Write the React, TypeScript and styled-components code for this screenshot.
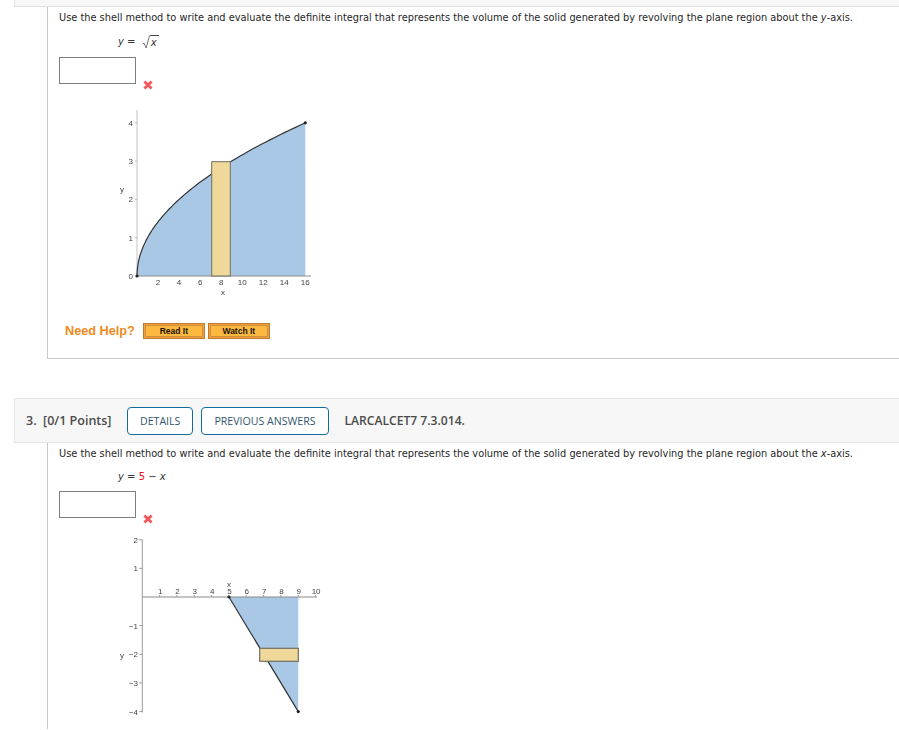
import React from 'react';
import styled, { createGlobalStyle } from 'styled-components';

const GlobalStyle = createGlobalStyle`
  html, body {
    margin: 0;
    padding: 0;
    background: #ffffff;
  }
`;

function WrongMark() {
  return (
    <MarkIcon viewBox="0 0 10 10" aria-label="incorrect">
      <path d="M1.4 1.4 L8.6 8.6 M8.6 1.4 L1.4 8.6" stroke="#f4565e" strokeWidth="2.8" fill="none" />
    </MarkIcon>
  );
}

function RootCurvePlot() {
  const x0 = 137;
  const y0 = 276;
  const ux = 10.52;
  const uy = 38.3;
  const pts: string[] = [];
  for (let i = 0; i <= 64; i++) {
    const x = (i / 64) * (i / 64) * 16;
    pts.push(`${(x0 + x * ux).toFixed(1)},${(y0 - Math.sqrt(x) * uy).toFixed(1)}`);
  }
  const curve = pts.join(' ');
  return (
    <PlotSvg width="220" height="190" viewBox="110 110 220 190">
      <polygon points={`${curve} ${x0 + 16 * ux},${y0}`} fill="#a9c8e6" />
      <line x1={x0} y1="110" x2={x0} y2={y0} stroke="#c4c4c4" strokeWidth="1" />
      <line x1={x0} y1={y0} x2="311" y2={y0} stroke="#8a8a8a" strokeWidth="1" />
      {[1, 2, 3, 4].map((n) => (
        <line key={n} x1={x0 - 2} y1={y0 - n * uy} x2={x0} y2={y0 - n * uy} stroke="#bbb" strokeWidth="1" />
      ))}
      <polyline points={curve} fill="none" stroke="#333" strokeWidth="1.2" />
      <rect x="211.7" y="161.7" width="18.6" height="114.3" fill="#f0d89b" stroke="#6f6f62" strokeWidth="1" />
      <circle cx={x0} cy={y0} r="1.6" fill="#222" />
      <circle cx={x0 + 16 * ux} cy={y0 - 4 * uy} r="1.6" fill="#222" />
      {[0, 1, 2, 3, 4].map((n) => (
        <PlotLabel key={n} x="133" y={y0 - n * uy + 3} textAnchor="end">{n}</PlotLabel>
      ))}
      {[2, 4, 6, 8, 10, 12, 14, 16].map((n) => (
        <PlotLabel key={n} x={x0 + n * ux} y="285" textAnchor="middle">{n}</PlotLabel>
      ))}
      <PlotLabel x="122" y="192" textAnchor="middle">y</PlotLabel>
      <PlotLabel x="223" y="295" textAnchor="middle">x</PlotLabel>
    </PlotSvg>
  );
}

function LinePlot() {
  const x0 = 142.3;
  const y0 = 598;
  const ux = 17.33;
  const uy = 28.65;
  const px = (n: number) => x0 + n * ux;
  const py = (n: number) => y0 - n * uy;
  return (
    <PlotSvg width="220" height="200" viewBox="110 530 220 200">
      <polygon points={`${px(5)},${py(0)} ${px(9)},${py(0)} ${px(9)},${py(-4)}`} fill="#a9c8e6" />
      <line x1={x0} y1="540.5" x2={x0} y2="713.5" stroke="#9a9a9a" strokeWidth="1" />
      <line x1={x0} y1={y0} x2="317" y2={y0} stroke="#8a8a8a" strokeWidth="1" />
      {[2, 1, -1, -2, -3, -4].map((n) => (
        <line key={n} x1={x0 - 3} y1={py(n)} x2={x0} y2={py(n)} stroke="#9a9a9a" strokeWidth="1" />
      ))}
      {[1, 2, 3, 4, 5, 6, 7, 8, 9, 10].map((n) => (
        <line key={n} x1={px(n)} y1={y0 - 2} x2={px(n)} y2={y0} stroke="#9a9a9a" strokeWidth="1" />
      ))}
      <line x1={px(5)} y1={py(0)} x2={px(9)} y2={py(-4)} stroke="#333" strokeWidth="1.2" />
      <rect x="259.7" y="649.3" width="38.6" height="13" fill="#f0d89b" stroke="#6f6f62" strokeWidth="1.2" />
      <circle cx={px(5)} cy={py(0)} r="1.6" fill="#222" />
      <circle cx={px(9)} cy={py(-4)} r="1.6" fill="#222" />
      {[2, 1].map((n) => (
        <PlotLabel key={n} x="138" y={py(n) + 3} textAnchor="end">{n}</PlotLabel>
      ))}
      {[-1, -2, -3, -4].map((n) => (
        <PlotLabel key={n} x="138" y={py(n) + 3} textAnchor="end">{`\u2212${-n}`}</PlotLabel>
      ))}
      {[1, 2, 3, 4, 5, 6, 7, 8, 9, 10].map((n) => (
        <PlotLabel key={n} x={px(n) + 0.5} y="595" textAnchor="middle">{n}</PlotLabel>
      ))}
      <PlotLabel x="122" y="659" textAnchor="middle">y</PlotLabel>
      <PlotLabel x="229" y="587.5" textAnchor="middle">x</PlotLabel>
    </PlotSvg>
  );
}

export default function App() {
  return (
    <Page>
      <GlobalStyle />
      <TopStrip />
      <QuestionBody>
        <Prompt>
          Use the shell method to write and evaluate the definite integral that represents the volume of the solid
          generated by revolving the plane region about the <em>y</em>-axis.
        </Prompt>
        <Equation $gap={11}>
          <em>y</em> = <RootSign viewBox="0 0 8 14"><path d="M0.5 9 L2 8.2 L4.2 13 L7.5 0.5" fill="none" stroke="#777" strokeWidth="1" /></RootSign>
          <Radicand><em>x</em></Radicand>
        </Equation>
        <AnswerRow $gap={8}>
          <AnswerBox />
          <WrongMark />
        </AnswerRow>
        <PlotWrap $gap={20}>
          <RootCurvePlot />
        </PlotWrap>
        <HelpRow>
          <HelpLabel>Need Help?</HelpLabel>
          <HelpButton>Read It</HelpButton>
          <HelpButton>Watch It</HelpButton>
        </HelpRow>
      </QuestionBody>

      <QuestionHeader>
        <PointsLabel>3.&nbsp; [0/1 Points]</PointsLabel>
        <OutlineButton>DETAILS</OutlineButton>
        <OutlineButton>PREVIOUS ANSWERS</OutlineButton>
        <SourceLabel>LARCALCET7 7.3.014.</SourceLabel>
      </QuestionHeader>
      <QuestionBody $open>
        <Prompt>
          Use the shell method to write and evaluate the definite integral that represents the volume of the solid
          generated by revolving the plane region about the <em>x</em>-axis.
        </Prompt>
        <Equation $gap={10}>
          <em>y</em> = <RedValue>5</RedValue> − <em>x</em>
        </Equation>
        <AnswerRow $gap={7}>
          <AnswerBox />
          <WrongMark />
        </AnswerRow>
        <PlotWrap $gap={5}>
          <LinePlot />
        </PlotWrap>
      </QuestionBody>
    </Page>
  );
}

const Page = styled.div`
  width: 899px;
  height: 730px;
  overflow: hidden;
  background: #ffffff;
`;

const TopStrip = styled.div`
  height: 7px;
  margin-left: 14px;
  box-sizing: border-box;
  background: #f7f7f7;
  border-left: 1px solid #e4e4e4;
  border-bottom: 1px solid #e0e0e0;
`;

const QuestionBody = styled.div<{ $open?: boolean }>`
  margin-left: 47px;
  padding: 4px 0 ${(p) => (p.$open ? 0 : 19)}px 11px;
  border-left: 1px solid #c8c8c8;
  border-bottom: ${(p) => (p.$open ? 'none' : '1px solid #c8c8c8')};
`;

const Prompt = styled.div`
  font-family: 'DejaVu Sans', Verdana, sans-serif;
  font-size: 9.8px;
  line-height: 13px;
  color: #1f1f1f;
  white-space: nowrap;
`;

const Equation = styled.div<{ $gap: number }>`
  display: flex;
  align-items: flex-end;
  margin: ${(p) => p.$gap}px 0 0 59px;
  height: 14px;
  font-family: 'DejaVu Sans', Verdana, sans-serif;
  font-size: 10px;
  line-height: 14px;
  color: #333333;
  white-space: pre;
`;

const RootSign = styled.svg`
  display: block;
  width: 8px;
  height: 14px;
  margin-left: 3px;
`;

const Radicand = styled.span`
  display: block;
  height: 13px;
  border-top: 1px solid #444444;
  line-height: 13px;
  padding: 0 2px 0 1px;
`;

const RedValue = styled.span`
  color: #ee1111;
`;

const AnswerRow = styled.div<{ $gap: number }>`
  display: flex;
  align-items: flex-end;
  gap: 7px;
  margin-top: ${(p) => p.$gap}px;
  height: 33px;
`;

const AnswerBox = styled.div`
  width: 77px;
  height: 27px;
  margin-bottom: 6px;
  box-sizing: border-box;
  border: 1px solid #7f7f7f;
  background: #ffffff;
`;

const MarkIcon = styled.svg`
  width: 10px;
  height: 10px;
  display: block;
`;

const PlotWrap = styled.div<{ $gap: number }>`
  margin: ${(p) => p.$gap}px 0 0 51px;
`;

const PlotSvg = styled.svg`
  display: block;
  filter: blur(0.3px);
`;

const PlotLabel = styled.text`
  font-family: 'Liberation Sans', Arial, sans-serif;
  font-size: 8px;
  fill: #444444;
`;

const HelpRow = styled.div`
  display: flex;
  align-items: center;
  margin: 23px 0 0 6px;
  height: 16px;
`;

const HelpLabel = styled.span`
  font-family: 'Liberation Sans', Arial, sans-serif;
  font-size: 12.7px;
  font-weight: 700;
  color: #ee8a1c;
  margin-right: 8px;
  white-space: nowrap;
`;

const HelpButton = styled.button`
  width: 62px;
  height: 16px;
  margin-right: 3px;
  padding: 0;
  box-sizing: border-box;
  border: 1px solid #c07a2c;
  box-shadow: inset 0 0 0 1px #f0a040, inset 0 0 0 2px #cf8f3c;
  background: #fdb83f;
  font-family: 'Liberation Sans', Arial, sans-serif;
  font-size: 8.5px;
  font-weight: 700;
  color: #1a1208;
`;

const QuestionHeader = styled.div`
  display: flex;
  align-items: center;
  height: 45px;
  margin: 39px 0 0 14px;
  padding-left: 11px;
  box-sizing: border-box;
  background: #f7f7f7;
  border: 1px solid #e6e6e6;
  border-right: none;
  font-family: 'Open Sans', sans-serif;
  color: #4a4a4a;
  white-space: nowrap;
`;

const PointsLabel = styled.span`
  font-size: 12.5px;
  font-weight: 600;
  width: 101px;
`;

const OutlineButton = styled.button`
  height: 28px;
  margin-right: 8px;
  padding: 0 12px;
  background: #ffffff;
  border: 1px solid #136c9f;
  border-radius: 4px;
  font-family: 'Open Sans', sans-serif;
  font-size: 10.6px;
  color: #33566f;
`;

const SourceLabel = styled.span`
  margin-left: 8px;
  font-size: 12.1px;
  font-weight: 600;
`;
